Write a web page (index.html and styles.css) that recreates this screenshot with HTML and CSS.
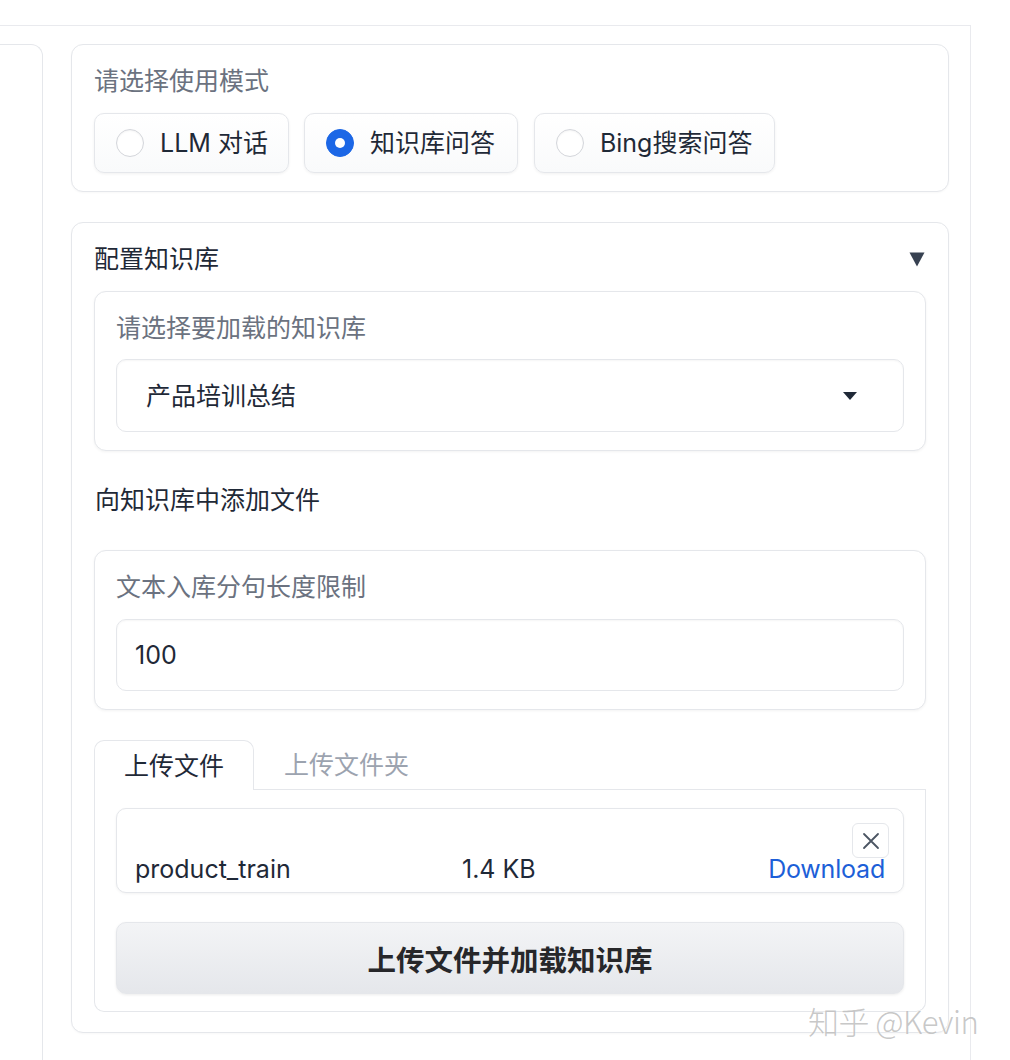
FILE: index.html
```html
<!DOCTYPE html>
<html lang="zh-CN">
<head>
<meta charset="utf-8">
<title>知识库问答</title>
<link rel="stylesheet" href="styles.css">
</head>
<body>
<div class="frame">
  <div class="left-col"><div class="left-card"></div></div>
  <div class="main">
    <section class="card mode-card">
      <div class="label">请选择使用模式</div>
      <div class="radios">
        <label class="radio radio-first"><span class="dot"></span><span>LLM 对话</span></label>
        <label class="radio"><span class="dot checked"></span><span>知识库问答</span></label>
        <label class="radio"><span class="dot"></span><span>Bing搜索问答</span></label>
      </div>
    </section>

    <section class="card kb-card">
      <div class="acc-head">
        <span class="acc-title">配置知识库</span>
        <svg class="acc-tri" width="16" height="16" viewBox="0 0 16 16"><path d="M0.5 1.5 H15.5 L8 15.5 Z" fill="#374151"/></svg>
      </div>

      <div class="block">
        <div class="label">请选择要加载的知识库</div>
        <div class="select">
          <span>产品培训总结</span>
          <svg width="14" height="8" viewBox="0 0 14 8"><path d="M0 0 H14 L7 8 Z" fill="#1f2937"/></svg>
        </div>
      </div>

      <div class="md">向知识库中添加文件</div>

      <div class="block">
        <div class="label">文本入库分句长度限制</div>
        <div class="input">100</div>
      </div>

      <div class="tabs">
        <div class="tab-nav">
          <div class="tab active">上传文件</div>
          <div class="tab">上传文件夹</div>
        </div>
        <div class="tab-body">
          <div class="file-box">
            <button class="close-btn" type="button" aria-label="close">
              <svg width="18" height="18" viewBox="0 0 18 18"><path d="M2 2 L16 16 M16 2 L2 16" stroke="#4b5563" stroke-width="1.8" stroke-linecap="round"/></svg>
            </button>
            <div class="file-row">
              <span class="fname">product_train</span>
              <span class="fsize">1.4 KB</span>
              <span class="fdl">Download</span>
            </div>
          </div>
          <button class="primary" type="button">上传文件并加载知识库</button>
        </div>
      </div>
    </section>
  </div>
</div>
<div class="watermark">知乎 @Kevin</div>
</body>
</html>
```
FILE: styles.css
```css
* { box-sizing: border-box; }

html, body {
  margin: 0;
  padding: 0;
  background: #ffffff;
  height: 1060px;
  overflow: hidden;
}

body {
  font-family: Inter, "Noto Sans CJK SC", sans-serif;
  font-size: 25px;
  line-height: 32px;
  color: #1f2937;
  position: relative;
}

.frame {
  margin-top: 25px;
  width: 971px;
  height: 1035px;
  border-top: 1px solid #e9eaee;
  border-right: 1px solid #e9eaee;
  display: flex;
  align-items: stretch;
  overflow: hidden;
}

.left-col {
  width: 43px;
  flex: none;
  padding-top: 18px;
  display: flex;
  flex-direction: column;
}

.left-card {
  flex: 1;
  width: 43px;
  border-top: 1px solid #e5e7eb;
  border-right: 1px solid #e5e7eb;
  border-top-right-radius: 12px;
}

.main {
  margin-left: 28px;
  padding-top: 18px;
  width: 878px;
  flex: none;
  display: flex;
  flex-direction: column;
  gap: 30px;
}

.card {
  border: 1px solid #e5e7eb;
  border-radius: 12px;
  background: #fff;
  box-shadow: 0 1px 2px rgba(0, 0, 0, 0.03);
}

.mode-card {
  padding: 20px 22px 18px 22px;
}

.label {
  color: #6b7280;
  height: 32px;
  white-space: nowrap;
}

.radios {
  margin-top: 16px;
  display: flex;
  gap: 16px;
}

.radio {
  height: 60px;
  display: inline-flex;
  align-items: center;
  gap: 16px;
  padding: 0 22px 0 21px;
  border: 1px solid #e5e7eb;
  border-radius: 10px;
  background: linear-gradient(#ffffff, #f9fafb);
  box-shadow: 0 1px 3px rgba(0, 0, 0, 0.06);
  color: #1f2937;
  white-space: nowrap;
}

.radio-first {
  padding-right: 20px;
  margin-right: -1px;
}

.dot {
  width: 28px;
  height: 28px;
  border-radius: 50%;
  border: 1px solid #d4d6db;
  background: #fff;
  box-shadow: inset 0 1px 2px rgba(0, 0, 0, 0.05);
  flex: none;
  position: relative;
}

.dot.checked {
  border-color: #1c67e6;
  background: #1c67e6;
  box-shadow: none;
}

.dot.checked::after {
  content: "";
  position: absolute;
  width: 10px;
  height: 10px;
  border-radius: 50%;
  background: #fff;
  left: 8px;
  top: 8px;
}

.kb-card {
  padding: 20px 22px 18px 22px;
  height: 811px;
  flex: none;
}

.acc-head {
  height: 32px;
  display: flex;
  align-items: center;
  justify-content: space-between;
  color: #1f2937;
}

.acc-tri {
  margin-right: 1px;
}

.block {
  border: 1px solid #e5e7eb;
  border-radius: 12px;
  padding: 20px 21px 18px 21px;
  background: #fff;
  box-shadow: 0 1px 3px rgba(0, 0, 0, 0.05);
}

.acc-head + .block {
  margin-top: 16px;
}

.select {
  margin-top: 15px;
  height: 73px;
  border: 1px solid #e5e7eb;
  border-radius: 10px;
  padding: 0 46px 0 29px;
  display: flex;
  align-items: center;
  justify-content: space-between;
  box-shadow: inset 0 1px 2px rgba(0, 0, 0, 0.04);
  color: #1f2937;
}

.md {
  margin: 33px 0 34px 1px;
  height: 32px;
  color: #1f2937;
}

.input {
  margin-top: 16px;
  height: 72px;
  border: 1px solid #e5e7eb;
  border-radius: 10px;
  padding: 0 18px;
  display: flex;
  align-items: center;
  box-shadow: inset 0 1px 2px rgba(0, 0, 0, 0.04);
  color: #1f2937;
}

.tabs {
  margin-top: 30px;
}

.tab-nav {
  display: flex;
  height: 50px;
  border-bottom: 1px solid #e5e7eb;
}

.tab {
  height: 50px;
  padding: 0 30px;
  display: flex;
  align-items: center;
  color: #9ca3af;
  white-space: nowrap;
}

.tab.active {
  color: #1f2937;
  border: 1px solid #e5e7eb;
  border-bottom: none;
  border-radius: 10px 10px 0 0;
  background: #fff;
  height: 50px;
  margin-bottom: -1px;
  padding: 0 29px;
}

.tab-body {
  border: 1px solid #e5e7eb;
  border-top: none;
  border-radius: 0 0 10px 10px;
  padding: 18px 21px 17px 21px;
}

.file-box {
  position: relative;
  height: 85px;
  border: 1px solid #e5e7eb;
  border-radius: 10px;
  background: #fff;
  box-shadow: 0 1px 3px rgba(0, 0, 0, 0.05);
  display: flex;
  flex-direction: column;
  justify-content: flex-end;
  padding: 0 18px 7px 18px;
}

.close-btn {
  position: absolute;
  top: 14px;
  right: 14px;
  width: 37px;
  height: 35px;
  border: 1px solid #e5e7eb;
  border-radius: 6px;
  background: #fff;
  display: flex;
  align-items: center;
  justify-content: center;
  padding: 0;
}

.file-row {
  display: grid;
  grid-template-columns: 327px 1fr auto;
  align-items: center;
  height: 32px;
}

.fname, .fsize {
  color: #1f2937;
}

.fdl {
  color: #1d5fd8;
  letter-spacing: -0.2px;
}

.primary {
  margin-top: 29px;
  width: 100%;
  height: 72px;
  border: 1px solid #e5e7eb;
  border-radius: 10px;
  background: linear-gradient(#f3f4f6, #e5e7eb);
  box-shadow: 0 1px 3px rgba(0, 0, 0, 0.08);
  font-family: Inter, "Noto Sans CJK SC", sans-serif;
  font-size: 28.5px;
  font-weight: 700;
  color: #27272a;
  display: block;
}

.watermark {
  position: absolute;
  left: 808px;
  top: 1001px;
  font-family: "Noto Sans CJK SC", sans-serif;
  font-size: 31px;
  font-weight: 300;
  line-height: 40px;
  letter-spacing: -0.5px;
  color: rgba(175, 175, 175, 0.7);
  white-space: nowrap;
  text-shadow: 0 0 2px rgba(255, 255, 255, 0.9);
}
```
